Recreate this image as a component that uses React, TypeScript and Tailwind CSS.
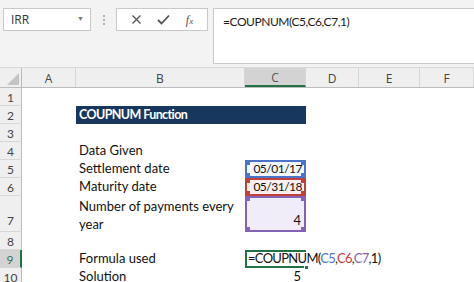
import React from 'react';

const cellFont = { fontFamily: 'Lato, "Open Sans", sans-serif' };

// column widths in px: A..F
const cols = [
  { key: 'A', w: 'w-[54px]' },
  { key: 'B', w: 'w-[169px]' },
  { key: 'C', w: 'w-[61px]' },
  { key: 'D', w: 'w-[53px]' },
  { key: 'E', w: 'w-[61px]' },
  { key: 'F', w: 'flex-1' },
];

const Corners: React.FC<{ color: string }> = ({ color }) => (
  <>
    <span className={`absolute -left-[2px] -top-[2px] w-[5px] h-[5px] ${color}`} />
    <span className={`absolute -right-[2px] -top-[2px] w-[5px] h-[5px] ${color}`} />
    <span className={`absolute -left-[2px] -bottom-[2px] w-[5px] h-[5px] ${color}`} />
    <span className={`absolute -right-[2px] -bottom-[2px] w-[5px] h-[5px] ${color}`} />
  </>
);

const RowHead: React.FC<{ n: number; active?: boolean; tall?: boolean }> = ({ n, active, tall }) => (
  <div
    className={`w-[22px] shrink-0 flex justify-center border-b border-[#d6d6d6] text-[12px] ${
      tall ? 'items-end pb-[1px]' : 'items-center pt-[2px]'
    } ${active ? 'bg-[#d3d3d3] text-[#2f7a55] border-r-2 border-r-[#217346]' : 'bg-[#efefef] text-[#444] border-r border-r-[#bcbcbc]'}`}
  >
    {n}
  </div>
);

export default function App() {
  return (
    <div className="w-[474px] h-[282px] overflow-hidden bg-white" style={{ fontFamily: '"Open Sans", "Noto Sans", sans-serif' }}>
      {/* toolbar: name box + buttons + formula bar */}
      <div className="h-[68px] bg-[#f3f3f3] flex items-start pt-[8px] border-b border-[#d8d8d8]">
        <div className="ml-[3px] w-[88px] h-[23px] bg-white border border-[#c8c8c8] flex items-center justify-between pl-[7px] pr-[6px] text-[12px] text-[#333]">
          <span>IRR</span>
          <span className="text-[7px] text-[#777]">▼</span>
        </div>
        <div className="w-[25px] h-[23px] flex flex-col items-center justify-center gap-[2px]">
          <span className="w-[2px] h-[2px] bg-[#b0b0b0]" />
          <span className="w-[2px] h-[2px] bg-[#b0b0b0]" />
          <span className="w-[2px] h-[2px] bg-[#b0b0b0]" />
        </div>
        <div className="w-[92px] h-[23px] bg-white border border-[#c8c8c8] flex items-center justify-around px-[6px] text-[#555]">
          <svg width="11" height="11" viewBox="0 0 11 11">
            <path d="M1.5 1.5 L9.5 9.5 M9.5 1.5 L1.5 9.5" stroke="#555" strokeWidth="1.3" />
          </svg>
          <svg width="13" height="11" viewBox="0 0 13 11">
            <path d="M1 6 L4.5 9.5 L12 1.5" stroke="#555" strokeWidth="1.8" fill="none" />
          </svg>
          <span className="text-[12px] italic text-[#555]" style={{ fontFamily: '"Liberation Serif", serif' }}>
            f<span className="text-[9px]">x</span>
          </span>
        </div>
        <div
          className="ml-[5px] flex-1 h-[56px] bg-white border border-[#c8c8c8] border-r-0 pl-[9px] pt-[4px] text-[12px] tracking-[-0.45px] text-[#1a1a1a]"
          style={cellFont}
        >
          =COUPNUM(C5,C6,C7,1)
        </div>
      </div>

      {/* column headers */}
      <div className="h-[20px] flex bg-[#efefef] border-b border-[#bcbcbc] text-[12px] text-[#444]">
        <div className="w-[22px] shrink-0 flex items-end justify-end pr-[2px] pb-[2px] border-r border-[#bcbcbc]">
          <svg width="12" height="12" viewBox="0 0 12 12">
            <path d="M12 0 L12 12 L0 12 Z" fill="#c4c4c4" />
          </svg>
        </div>
        {cols.map((c) => (
          <div
            key={c.key}
            className={`${c.w} shrink-0 flex items-center justify-center pt-[2px] border-r border-[#d6d6d6] ${
              c.key === 'C' ? 'bg-[#d3d3d3] text-[#555] border-b-2 border-b-[#217346]' : ''
            }`}
          >
            {c.key}
          </div>
        ))}
      </div>

      {/* sheet rows */}
      <div className="text-[13px] text-[#111]" style={cellFont}>
        {/* 1 */}
        <div className="h-[18px] flex">
          <RowHead n={1} />
        </div>
        {/* 2 */}
        <div className="h-[18px] flex">
          <RowHead n={2} />
          <div className="w-[54px]" />
          <div className="w-[230px] bg-[#17375e] text-white font-bold text-[12.5px] tracking-[-0.6px] flex items-center pt-[1px] pl-[3px]">
            COUPNUM Function
          </div>
        </div>
        {/* 3 */}
        <div className="h-[18px] flex">
          <RowHead n={3} />
        </div>
        {/* 4 */}
        <div className="h-[18px] flex">
          <RowHead n={4} />
          <div className="w-[54px]" />
          <div className="w-[169px] flex items-end pl-[3px]">Data Given</div>
        </div>
        {/* 5 */}
        <div className="h-[18px] flex">
          <RowHead n={5} />
          <div className="w-[54px]" />
          <div className="w-[169px] flex items-end pl-[3px]">Settlement date</div>
          <div className="relative w-[61px] border-2 border-[#4a74c9] bg-[#f4f7fd] flex items-center justify-end pr-[2px] text-[12px] tracking-[-0.5px]">
            05/01/17
            <Corners color="bg-[#4a74c9]" />
          </div>
        </div>
        {/* 6 */}
        <div className="h-[18px] flex">
          <RowHead n={6} />
          <div className="w-[54px]" />
          <div className="w-[169px] flex items-end pl-[3px]">Maturity date</div>
          <div className="relative w-[61px] border-2 border-[#c0403a] bg-[#fbeeee] flex items-center justify-end pr-[2px] text-[12px] tracking-[-0.5px]">
            05/31/18
            <Corners color="bg-[#c0403a]" />
          </div>
        </div>
        {/* 7 */}
        <div className="h-[36px] flex">
          <RowHead n={7} tall />
          <div className="w-[54px]" />
          <div className="w-[169px] flex flex-col justify-center pt-[2px] pl-[3px] leading-[18px]">
            <span>Number of payments every</span>
            <span>year</span>
          </div>
          <div className="relative w-[61px] border-2 border-[#8462b8] bg-[#f1edf8] flex items-end justify-end pr-[3px]">
            4
            <Corners color="bg-[#8462b8]" />
          </div>
        </div>
        {/* 8 */}
        <div className="h-[18px] flex">
          <RowHead n={8} />
        </div>
        {/* 9 */}
        <div className="h-[18px] flex">
          <RowHead n={9} active />
          <div className="w-[54px]" />
          <div className="w-[169px] flex items-end pl-[3px]">Formula used</div>
          <div className="relative w-[61px] border-2 border-r-0 border-[#217346] flex items-center pl-[1px] whitespace-nowrap overflow-visible z-10 tracking-[-0.7px]">
            <span>
              =COUPNUM(<span className="text-[#4a74c9]">C5</span>,<span className="text-[#c0403a]">C6</span>,
              <span className="text-[#8462b8]">C7</span>,1)
            </span>
            <span className="ml-[2px] w-[1px] h-[15px] bg-black" />
            <span className="absolute -right-[3px] -bottom-[4px] w-[5px] h-[5px] bg-[#217346] border border-white" />
          </div>
        </div>
        {/* 10 */}
        <div className="h-[18px] flex">
          <RowHead n={10} />
          <div className="w-[54px]" />
          <div className="w-[169px] flex items-end pl-[3px]">Solution</div>
          <div className="w-[61px] flex items-end justify-end pr-[5px]">5</div>
        </div>
      </div>
    </div>
  );
}
